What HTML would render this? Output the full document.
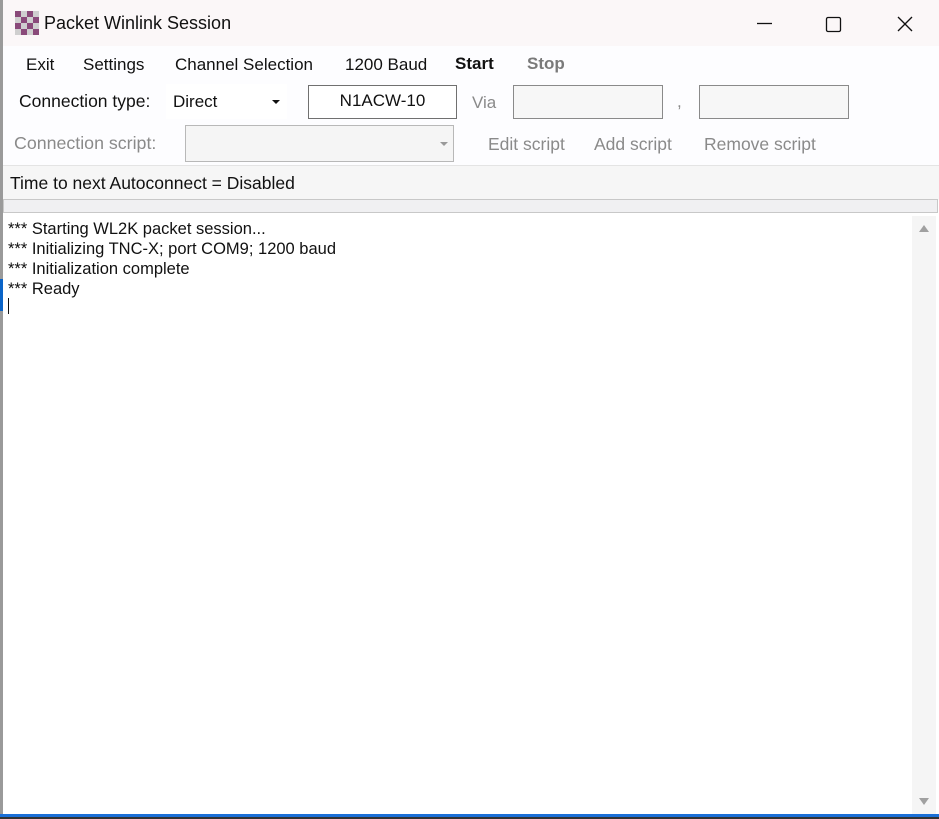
<!DOCTYPE html>
<html><head><style>
*{margin:0;padding:0;box-sizing:border-box}
body{width:939px;height:819px;overflow:hidden;background:#fff;font-family:"Liberation Sans",sans-serif;position:relative}
.a{position:absolute;white-space:nowrap}
.m{font-size:17px;color:#111}
.g{color:#8a8a8a}
</style></head><body>
<div class="a" style="left:0;top:0;width:939px;height:46px;background:#fbf7f8"></div>
<div class="a" style="left:0;top:0;width:3px;height:819px;background:#9a9a9a"></div>
<svg class="a" style="left:15px;top:11px" width="24" height="24">
<g fill="#8a4a7a"><rect x="0" y="0" width="6" height="6"/><rect x="12" y="0" width="6" height="6"/><rect x="6" y="6" width="6" height="6"/><rect x="18" y="6" width="6" height="6"/><rect x="0" y="12" width="6" height="6"/><rect x="12" y="12" width="6" height="6"/><rect x="6" y="18" width="6" height="6"/><rect x="18" y="18" width="6" height="6"/></g>
<g fill="#cfcfcf"><rect x="6" y="0" width="6" height="6"/><rect x="18" y="0" width="6" height="6"/><rect x="0" y="6" width="6" height="6"/><rect x="12" y="6" width="6" height="6"/><rect x="6" y="12" width="6" height="6"/><rect x="18" y="12" width="6" height="6"/><rect x="0" y="18" width="6" height="6"/><rect x="12" y="18" width="6" height="6"/></g></svg>
<div class="a" style="left:44px;top:13px;font-size:18px;color:#111">Packet Winlink Session</div>
<svg class="a" style="left:755px;top:14px" width="170" height="20" fill="none" stroke="#111" stroke-width="1.3">
<line x1="2" y1="9.5" x2="17" y2="9.5"/><rect x="71.5" y="3.5" width="14" height="14" rx="1.5"/><line x1="143" y1="3" x2="157" y2="17"/><line x1="157" y1="3" x2="143" y2="17"/></svg>
<div class="a" style="left:3px;top:46px;width:936px;height:120px;background:#fdfdff"></div>
<div class="a m" style="left:26px;top:55px">Exit</div>
<div class="a m" style="left:83px;top:55px">Settings</div>
<div class="a m" style="left:175px;top:55px">Channel Selection</div>
<div class="a m" style="left:345px;top:55px">1200 Baud</div>
<div class="a m" style="left:455px;top:54px;font-weight:bold">Start</div>
<div class="a m" style="left:527px;top:54px;font-weight:bold;color:#7a7a7a">Stop</div>
<div class="a m" style="left:19px;top:91px;font-size:17.5px">Connection type:</div>
<div class="a" style="left:166px;top:84px;width:121px;height:35px;background:#fff"></div>
<div class="a m" style="left:173px;top:92px">Direct</div>
<div class="a" style="left:272px;top:100px;border-left:4px solid transparent;border-right:4px solid transparent;border-top:4px solid #111"></div>
<div class="a" style="left:308px;top:85px;width:149px;height:34px;border:1px solid #707070;background:#fff;text-align:center;font-size:17px;padding-top:5px;color:#111">N1ACW-10</div>
<div class="a m g" style="left:472px;top:93px">Via</div>
<div class="a" style="left:513px;top:85px;width:150px;height:34px;border:1px solid #8a8a8a;background:#f7f7f7"></div>
<div class="a g" style="left:677px;top:92px;font-size:17px">,</div>
<div class="a" style="left:699px;top:85px;width:150px;height:34px;border:1px solid #8a8a8a;background:#f7f7f7"></div>
<div class="a m g" style="left:14px;top:133px;font-size:17.8px">Connection script:</div>
<div class="a" style="left:185px;top:125px;width:269px;height:37px;border:1px solid #b8b8b8;background:#f5f5f5"></div>
<div class="a" style="left:440px;top:142px;border-left:4px solid transparent;border-right:4px solid transparent;border-top:4px solid #999"></div>
<div class="a m g" style="left:488px;top:134px;font-size:17.5px">Edit script</div>
<div class="a m g" style="left:594px;top:134px;font-size:17.5px">Add script</div>
<div class="a m g" style="left:704px;top:134px;font-size:17.5px">Remove script</div>
<div class="a" style="left:3px;top:165px;width:936px;height:35px;background:#f6f6f6;border-top:1px solid #e4e4e4"></div>
<div class="a" style="left:10px;top:173px;font-size:17.5px;color:#111">Time to next Autoconnect = Disabled</div>
<div class="a" style="left:3px;top:199px;width:935px;height:14px;background:#f0f0f2;border:1px solid #c8c8c8"></div>
<div class="a" style="left:912px;top:216px;width:24px;height:598px;background:#f5f5f5"></div>
<div class="a" style="left:919px;top:225px;border-left:5px solid transparent;border-right:5px solid transparent;border-bottom:7px solid #a0a0a0"></div>
<div class="a" style="left:919px;top:798px;border-left:5px solid transparent;border-right:5px solid transparent;border-top:7px solid #a0a0a0"></div>
<div class="a" style="left:8px;top:219px;font-size:16.5px;line-height:20px;color:#111">*** Starting WL2K packet session...<br>*** Initializing TNC-X; port COM9; 1200 baud<br>*** Initialization complete<br>*** Ready</div>
<div class="a" style="left:8px;top:298px;width:1px;height:16px;background:#111"></div>
<div class="a" style="left:0;top:279px;width:3px;height:32px;background:#0a64c8"></div>
<div class="a" style="left:0;top:814px;width:939px;height:3px;background:#1a6fd6"></div>
<div class="a" style="left:0;top:817px;width:939px;height:2px;background:#333"></div>
</body></html>
